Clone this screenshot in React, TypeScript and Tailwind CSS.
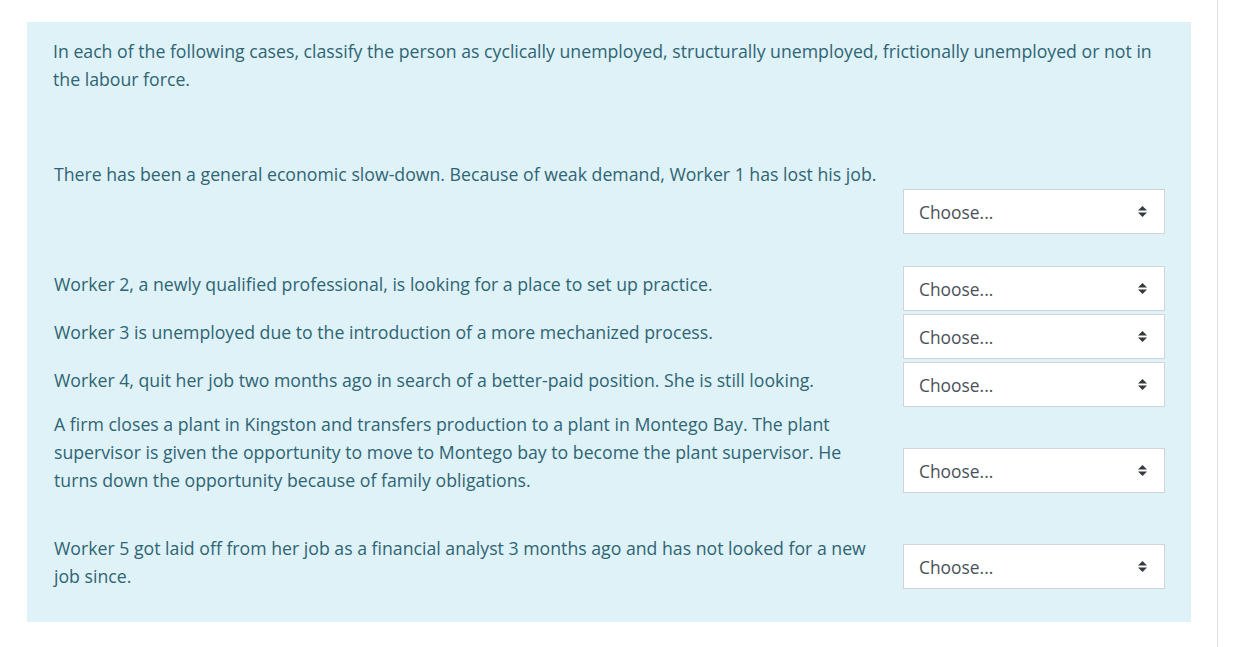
import React from 'react';

const font = { fontFamily: '"Open Sans", "Noto Sans", sans-serif' };

interface Row {
  text: string;
  textTop: string;
  selectTop: string;
  gap: string;
}

const rows: Row[] = [
  {
    text: 'There has been a general economic slow-down. Because of weak demand, Worker 1 has lost his job.',
    textTop: 'mt-0',
    selectTop: 'mt-[29px]',
    gap: 'mt-0',
  },
  {
    text: 'Worker 2, a newly qualified professional, is looking for a place to set up practice.',
    textTop: 'mt-[4px]',
    selectTop: 'mt-0',
    gap: 'mt-[32px]',
  },
  {
    text: 'Worker 3 is unemployed due to the introduction of a more mechanized process.',
    textTop: 'mt-[4px]',
    selectTop: 'mt-0',
    gap: 'mt-[3px]',
  },
  {
    text: 'Worker 4, quit her job two months ago in search of a better-paid position. She is still looking.',
    textTop: 'mt-[4px]',
    selectTop: 'mt-0',
    gap: 'mt-[3px]',
  },
  {
    text: 'A firm closes a plant in Kingston and transfers production to a plant in Montego Bay. The plant supervisor is given the opportunity to move to Montego bay to become the plant supervisor. He turns down the opportunity because of family obligations.',
    textTop: 'mt-0',
    selectTop: 'mt-[38px]',
    gap: 'mt-[3px]',
  },
  {
    text: 'Worker 5 got laid off from her job as a financial analyst 3 months ago and has not looked for a new job since.',
    textTop: 'mt-0',
    selectTop: 'mt-[10px]',
    gap: 'mt-[40px]',
  },
];

// up/down caret like the bootstrap custom-select arrow
const SortArrow = () => (
  <svg width="9" height="11" viewBox="0 0 9 11" className="shrink-0">
    <path d="M4.5 0 L9 4.5 L0 4.5 Z" fill="#343a40" />
    <path d="M0 6.5 L9 6.5 L4.5 11 Z" fill="#343a40" />
  </svg>
);

const ChooseSelect = () => (
  <div className="flex h-[45px] w-[262px] items-center justify-between border border-[#ced4da] bg-white pl-[15px] pr-[17px] text-[17.4px] text-[#495057]">
    <span>Choose...</span>
    <SortArrow />
  </div>
);

export default function App() {
  return (
    <div className="flex min-h-[647px] w-full bg-white" style={font}>
      <div className="flex w-[1217px] shrink-0 flex-col pl-[27px] pr-[26px] pt-[22px]">
        <div className="flex flex-col bg-[#def2f8] pb-[32px] pl-[26px] pr-[26px] pt-[15px] text-[17.7px] leading-[28px] text-[#2f6473]">
          <p className="w-[1110px]">
            In each of the following cases, classify the person as cyclically unemployed, structurally unemployed,
            frictionally unemployed or not in the labour force.
          </p>

          <div className="mt-[67px] flex flex-col">
            {rows.map((row, i) => (
              <div key={i} className={`flex items-start justify-between ${row.gap}`}>
                <p className={`w-[827px] pl-[1px] ${row.textTop}`}>{row.text}</p>
                <div className={row.selectTop}>
                  <ChooseSelect />
                </div>
              </div>
            ))}
          </div>
        </div>
      </div>
      <div className="w-px self-stretch bg-[#dee2e6]" />
      <div className="flex-1" />
    </div>
  );
}
